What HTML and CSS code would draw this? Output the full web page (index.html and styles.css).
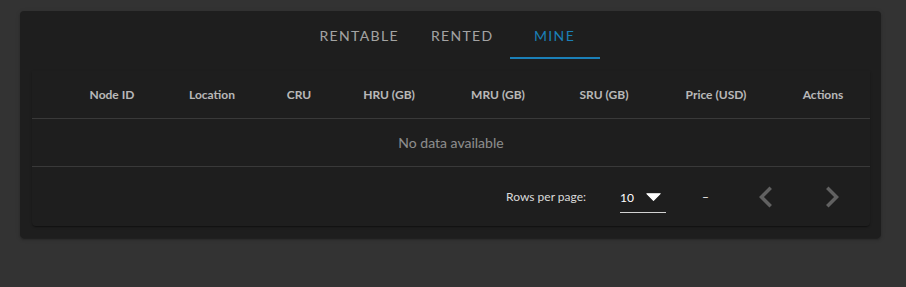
FILE: index.html
```html
<!DOCTYPE html>
<html>
<head>
    <link rel="stylesheet" href="styles.css">
</head>
<body>
    <div class="card">
        <div class="tabs">
            <div class="tab">Rentable</div>
            <div class="tab">Rented</div>
            <div class="tab active">Mine</div>
        </div>
        <div class="table-wrap">
            <table class="nodes">
                <thead>
                    <tr>
                        <th></th>
                        <th>Node ID</th>
                        <th>Location</th>
                        <th>CRU</th>
                        <th>HRU (GB)</th>
                        <th>MRU (GB)</th>
                        <th>SRU (GB)</th>
                        <th>Price (USD)</th>
                        <th>Actions</th>
                    </tr>
                </thead>
                <tbody>
                    <tr>
                        <td class="no-data" colspan="9">No data available</td>
                    </tr>
                </tbody>
            </table>
            <div class="footer">
                <span class="rows-label">Rows per page:</span>
                <div class="rows-select">
                    <span>10</span>
                    <svg class="drop" viewBox="6.5 9.5 11 6" width="15" height="8"><path d="M7 10l5 5 5-5z" fill="#fff" stroke="#fff" stroke-width="0.8" stroke-linejoin="round"/></svg>
                </div>
                <span class="range">–</span>
                <button class="page-btn">
                    <svg viewBox="0 0 24 24" width="42" height="42"><path d="M15.41 7.41L14 6l-6 6 6 6 1.41-1.41L10.83 12z"/></svg>
                </button>
                <button class="page-btn next">
                    <svg viewBox="0 0 24 24" width="42" height="42"><path d="M10 6L8.59 7.41 13.17 12l-4.58 4.59L10 18l6-6z"/></svg>
                </button>
            </div>
        </div>
    </div>
</body>
</html>
```

FILE: styles.css
```css
body {
    margin: 0;
    padding: 11px 25px 0 20px;
    background-color: #333333;
    font-family: Lato, "Open Sans", sans-serif;
    color: #fff;
    height: 287px;
    box-sizing: border-box;
}

.card {
    background-color: #1e1e1e;
    border-radius: 4px;
    box-shadow: 0 3px 1px -2px rgba(0, 0, 0, 0.2), 0 2px 2px 0 rgba(0, 0, 0, 0.14), 0 1px 5px 0 rgba(0, 0, 0, 0.12);
    padding-bottom: 12px;
}

.tabs {
    display: flex;
    justify-content: center;
    height: 48px;
    padding-left: 2px;
}

.tab {
    min-width: 90px;
    padding: 0 16px;
    box-sizing: border-box;
    display: flex;
    align-items: center;
    justify-content: center;
    text-transform: uppercase;
    font-size: 14px;
    letter-spacing: 1.35px;
    color: rgba(255, 255, 255, 0.6);
    border-bottom: 2px solid transparent;
    padding-top: 2px;
}

.tab.active {
    color: #1b80b8;
    border-bottom-color: #1b80b8;
}

.table-wrap {
    margin: 12px 11px 0 12px;
    background-color: #1e1e1e;
    border-radius: 0 0 4px 4px;
    box-shadow: 0 2px 1px -1px rgba(0, 0, 0, 0.2), 0 1px 1px 0 rgba(0, 0, 0, 0.14), 0 1px 3px 0 rgba(0, 0, 0, 0.12);
}

.nodes {
    width: 100%;
    border-collapse: collapse;
    table-layout: fixed;
}

.nodes th {
    height: 46px;
    font-size: 12px;
    font-weight: 700;
    color: rgba(255, 255, 255, 0.7);
    text-align: center;
    padding: 0 0 1px;
    border-bottom: 1px solid rgba(255, 255, 255, 0.12);
}

.nodes th:nth-child(1) { width: 32px; }
.nodes th:nth-child(2) { width: 96px; }
.nodes th:nth-child(3) { width: 104px; }
.nodes th:nth-child(4) { width: 70px; }
.nodes th:nth-child(5) { width: 110px; }
.nodes th:nth-child(6) { width: 108px; }
.nodes th:nth-child(7) { width: 104px; }
.nodes th:nth-child(8) { width: 120px; }
.nodes th:nth-child(9) { width: 94px; }

.no-data {
    height: 47px;
    padding: 0;
    text-align: center;
    font-size: 14px;
    color: rgba(255, 255, 255, 0.5);
    border-bottom: 1px solid rgba(255, 255, 255, 0.12);
}

.footer {
    height: 59px;
    display: flex;
    align-items: center;
    justify-content: flex-end;
    padding-right: 17px;
    font-size: 12px;
}

.rows-label {
    color: rgba(255, 255, 255, 0.85);
    margin-right: 34px;
}

.rows-select {
    width: 46px;
    height: 30px;
    box-sizing: border-box;
    display: flex;
    align-items: center;
    border-bottom: 1px solid rgba(255, 255, 255, 0.8);
    margin-top: 2px;
    font-size: 12px;
    color: #fff;
}

.rows-select span {
    margin-right: 12px;
}

.range {
    margin-left: 36px;
    margin-right: 36px;
    color: #fff;
}

.page-btn {
    width: 42px;
    height: 42px;
    padding: 0;
    border: none;
    background: none;
    display: flex;
}

.page-btn svg {
    fill: rgba(255, 255, 255, 0.3);
}

.page-btn.next {
    margin-left: 24px;
}
```
